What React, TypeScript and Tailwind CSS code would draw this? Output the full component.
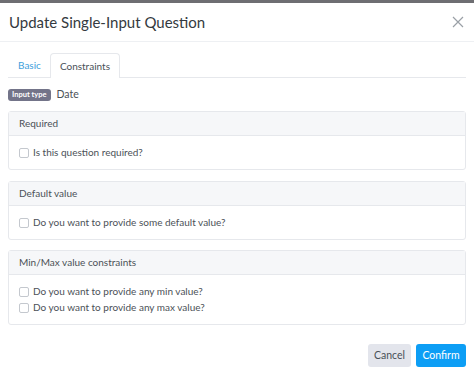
export default function App() {
  const font = { fontFamily: 'Lato, "Open Sans", sans-serif' };
  return (
    <div className="w-[474px] h-[378px] bg-white text-[#4b5157] overflow-hidden" style={font}>
      <div className="h-[3px] bg-[#6e6e72]" />
      <div className="flex items-center justify-between h-[39px] pl-[9px] pr-[10px] border-b border-[#eef0f3]">
        <h1 className="text-[15px] text-[#343a40] leading-none">Update Single-Input Question</h1>
        <svg width="12" height="12" viewBox="0 0 12 12" className="text-[#9aa0a6]">
          <path d="M1 1L11 11M11 1L1 11" stroke="currentColor" strokeWidth="1.2" />
        </svg>
      </div>
      <div className="px-[8px] pt-[11px]">
        <div className="flex border-b border-[#e6e8ec] h-[25px] text-[10px]">
          <div className="pl-[10px] pr-[9px] flex items-center text-[#3d9fdc]">Basic</div>
          <div className="px-[9px] flex items-center border border-b-0 border-[#e6e8ec] rounded-t bg-white text-[#495057] -mb-px">
            Constraints
          </div>
        </div>
        <div className="flex items-center gap-[6px] mt-[11px] h-[12px]">
          <span className="bg-[#737489] text-white text-[7.5px] font-bold rounded-[3px] px-[4px] h-[12px] leading-[12px]">
            Input type
          </span>
          <span className="text-[10.5px]">Date</span>
        </div>
        <Card title="Required" items={["Is this question required?"]} className="mt-[10px]" />
        <Card title="Default value" items={["Do you want to provide some default value?"]} className="mt-[11px]" />
        <Card
          title="Min/Max value constraints"
          items={["Do you want to provide any min value?", "Do you want to provide any max value?"]}
          className="mt-[10px]"
        />
        <div className="flex justify-end gap-[5px] mt-[19px]">
          <button className="h-[23px] w-[43px] rounded-[3px] bg-[#e3e5ec] text-[#495057] text-[10.5px]">Cancel</button>
          <button className="h-[23px] w-[50px] rounded-[3px] bg-[#0d9ef5] text-white text-[10.5px]">Confirm</button>
        </div>
      </div>
    </div>
  );
}

function Card({ title, items, className }: { title: string; items: string[]; className?: string }) {
  return (
    <div className={`border border-[#e6e8ec] rounded-[3px] ${className ?? ""}`}>
      <div className="h-[24px] bg-[#f6f7f9] border-b border-[#e6e8ec] flex items-center px-[10px] text-[10px]">
        {title}
      </div>
      <div className="px-[10px] py-[10px] flex flex-col gap-[3px]">
        {items.map((t) => (
          <label key={t} className="flex items-center gap-[4px] text-[10px] h-[13px]">
            <span className="w-[10px] h-[10px] border border-[#c4c8ce] rounded-[2px] bg-white" />
            {t}
          </label>
        ))}
      </div>
    </div>
  );
}
